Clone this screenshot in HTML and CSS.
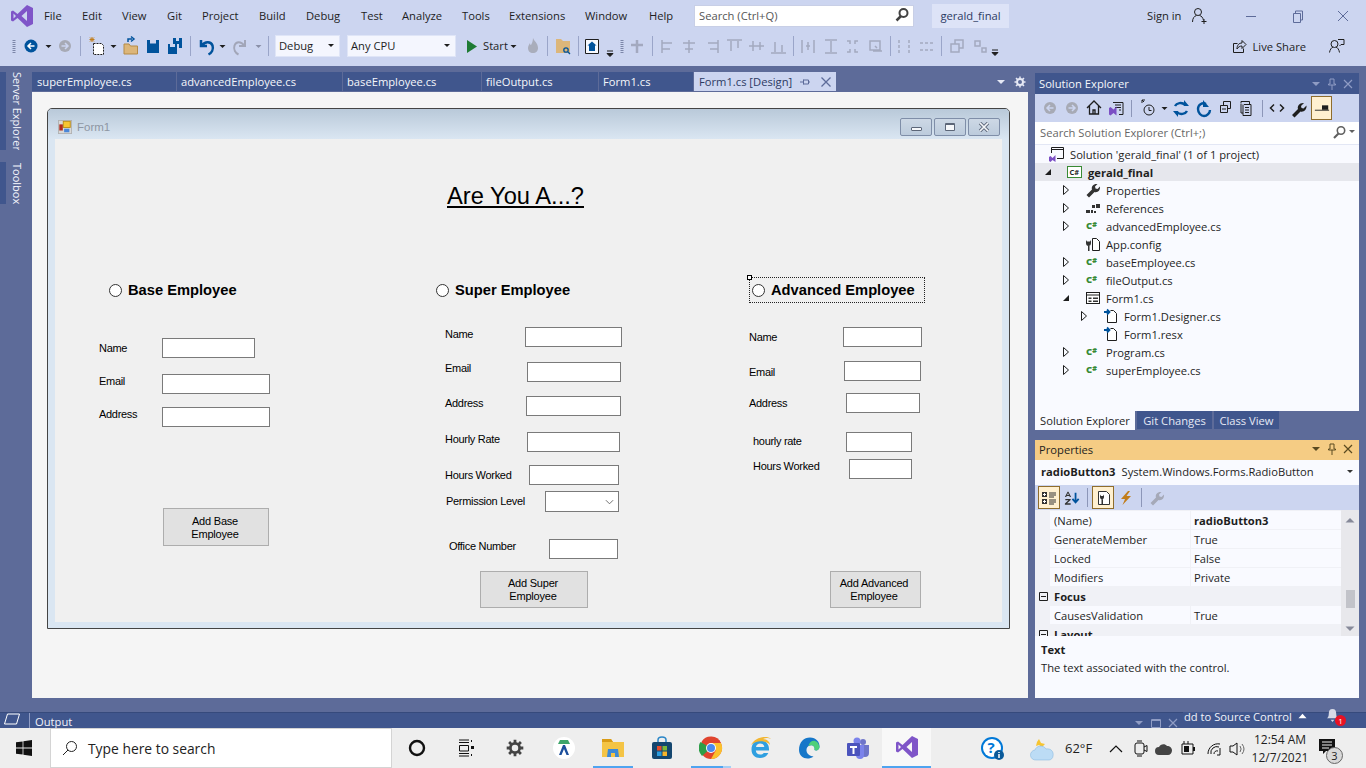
FILE: index.html
```html
<!DOCTYPE html>
<html lang="en">
<head>
<meta charset="utf-8">
<title>gerald_final - Visual Studio</title>
<link rel="stylesheet" href="styles.css">
</head>
<body>
<svg class="defs" aria-hidden="true">
  <symbol id="vs" viewBox="0 0 24 24"><path fill-rule="evenodd" d="M17 1l6 3v16l-6 3-9.500-9L3 17.500 1 16.400V7.600l2-1.100L7.500 10zM17 7l-5.500 5 5.500 5zM3.500 9.500v5L6 12z"/></symbol>
  <symbol id="exp" viewBox="0 0 16 16"><path d="M5.500 3.500l5 4.500-5 4.500z" fill="#f7f9fe" stroke="#1e1e1e"/></symbol>
  <symbol id="col" viewBox="0 0 16 16"><path d="M11 5v6H5z" fill="#1e1e1e"/></symbol>
  <symbol id="doc" viewBox="0 0 16 16"><path d="M4.500 5.500v9h9v-9l-3-3h-3" fill="#fff" stroke="#1e1e1e"/><path d="M1 4h5M4 1.500L6.500 4 4 6.500" fill="none" stroke="#00539c" stroke-width="1.800"/></symbol>
  <symbol id="wrench" viewBox="0 0 16 16"><path d="M1.500 13L7 7.500C6 4.500 8.500 1.500 12.500 2L10 4.500l.5 2 2 .5L15 4.500c.5 4-2.500 6.500-5.500 5.500L4 15.500z" fill="currentColor"/></symbol>
</svg>

<header class="titlebar">
  <svg class="logo" viewBox="0 0 24 24"><use href="#vs"/></svg>
  <nav class="menu">
    <span>File</span><span>Edit</span><span>View</span><span>Git</span><span>Project</span><span>Build</span><span>Debug</span><span>Test</span><span>Analyze</span><span>Tools</span><span>Extensions</span><span>Window</span><span>Help</span>
  </nav>
  <div class="quick-search">
    <span>Search (Ctrl+Q)</span>
    <svg class="ico16" viewBox="0 0 16 16"><circle cx="9.500" cy="6" r="4" fill="none" stroke="#424242" stroke-width="2"/><path d="M7 9l-4.500 4.500" stroke="#424242" stroke-width="2.500"/></svg>
  </div>
  <div class="solution-name">gerald_final</div>
  <div class="signin">Sign in</div>
  <svg class="person" viewBox="0 0 18 18"><circle cx="7" cy="5" r="3.500" fill="none" stroke="#1e1e1e"/><path d="M1.500 15c0-4 2-6 4-6.500M8.500 8.500c2 .5 3.500 2 4 5" fill="none" stroke="#1e1e1e"/><path d="M13 12v5M10.500 14.500h5" stroke="#1e1e1e"/></svg>
  <div class="winbtns">
    <svg viewBox="0 0 46 32"><path d="M18 16.500h10" stroke="#5d6b99"/></svg>
    <svg viewBox="0 0 46 32"><path d="M19.500 13.500h7v9h-7zM21.500 13.500v-2.500h7v9h-2" fill="none" stroke="#5d6b99"/></svg>
    <svg viewBox="0 0 46 32"><path d="M18 11l10 10M28 11L18 21" stroke="#5d6b99"/></svg>
  </div>
</header>

<div class="toolbar">
  <svg class="tb-a" viewBox="8 32 262 34">
    <path d="M14 40v13" stroke="#7c86a8" stroke-dasharray="1 1" stroke-width="3"/>
    <circle cx="31" cy="46" r="6.500" fill="#00539c"/><path d="M34.500 46h-6M31 43l-3 3 3 3" fill="none" stroke="#fff" stroke-width="1.500"/>
    <path d="M45.500 45h6l-3 3z" fill="#1e1e1e"/>
    <circle cx="65" cy="46" r="6" fill="#a7aab5"/><path d="M61.500 46h6M65 43l3 3-3 3" fill="none" stroke="#ccd5f0" stroke-width="1.500"/>
    <path d="M80.500 36v20M190.500 36v20M268.500 36v20" stroke="#9aa5c9"/>
    <path d="M93.500 43.500h8l2 2v9h-10z" fill="#fff" stroke="#1e1e1e" stroke-dasharray="2 1"/><path d="M92 37v5M89.500 39.500h5M90 37.500l4 4M94 37.500l-4 4" stroke="#c27d1a"/>
    <path d="M110.500 45h6l-3 3z" fill="#1e1e1e"/>
    <path d="M124 44h5l1.500 2h7v8h-13.500z" fill="#dcb67a" stroke="#b58b46"/><path d="M128 42v-3l4 0M131 36.500l3 2.500-3 2.500" fill="none" stroke="#00539c" stroke-width="1.500"/>
    <path d="M147 40h12v13h-12z" fill="#00539c"/><path d="M150 40h6v3.500h-6z" fill="#ccd5f0"/>
    <path d="M168 44h9v10h-9z" fill="#00539c"/><path d="M173 38h9v10h-3v-4h-6z" fill="#00539c"/><path d="M170 44h5v3h-5zM176 38h3v3h-3z" fill="#ccd5f0"/>
    <path d="M201 40v6h6M202 45.500c3-4.500 9-4 10.500 0 1.300 4-1 7.500-4 9" fill="none" stroke="#00539c" stroke-width="2.500"/>
    <path d="M219.500 45h6l-3 3z" fill="#1e1e1e"/>
    <path d="M245 40v6h-6M244 45.500c-3-4.500-8-4-9.500 0-1.300 4 1 7.500 4 9" fill="none" stroke="#a2a6b8" stroke-width="2"/>
    <path d="M255.500 45h6l-3 3z" fill="#8a90a8"/>
  </svg>
  <div class="combo combo-debug"><span>Debug</span><i class="caret"></i></div>
  <div class="combo combo-cpu"><span>Any CPU</span><i class="caret"></i></div>
  <svg class="tb-play" viewBox="456 32 27 34"><path d="M467 40l10 6.500-10 6.500z" fill="#1e7b34"/></svg>
  <span class="start">Start</span>
  <svg class="tb-b" viewBox="507 32 496 34">
    <path d="M510.500 45h6l-3 3z" fill="#1e1e1e"/>
    <path d="M533 38c1 3 5 5 5 10 0 3-2 5-5 5s-5-2-5-5c0-2 1-3 2-5 0 2 1 2 1 2 1-2 2-4 2-7z" fill="#a9adbb"/>
    <path d="M547.500 36v20M578.500 36v20M652.500 36v20M793.500 36v20M890.500 36v20M941.500 36v20" stroke="#9aa5c9"/>
    <path d="M556 39h5l2 2h7v12h-14z" fill="#dcb67a"/><circle cx="566" cy="50" r="2.200" fill="none" stroke="#00539c" stroke-width="1.300"/><path d="M568 52l2 2" stroke="#00539c" stroke-width="1.300"/>
    <path d="M585.500 39.500h13v14h-13z" fill="#f7f9fe" stroke="#1e1e1e"/><path d="M592 41.500l-4.500 4h1.500v5.500h6V45.500h1.500z" fill="#00539c"/>
    <path d="M607 51h6M607 53.500h6l-3 3z" stroke="#1e1e1e" fill="#1e1e1e"/>
    <path d="M622 40v13" stroke="#7c86a8" stroke-dasharray="1 1" stroke-width="3"/>
    <g fill="none" stroke="#a3a9bf" stroke-width="1.500">
      <path d="M637 40v13M631 45h12" stroke-width="2.500"/>
      <path d="M662 40v13M662 43h10M662 49h8"/>
      <path d="M689 40v13M683 43h12M685 49h8"/>
      <path d="M718 40v13M708 43h10M710 49h8"/>
      <path d="M727 40h15M731 41v10M738 41v7"/>
      <path d="M749 46h15M753 41v10M760 42v8"/>
      <path d="M771 53h15M775 42v10M782 45v7"/>
      <path d="M802 40v13M814 40v13M806 46h4M808 42v8"/>
      <path d="M825 40h12M825 53h12M831 41v11"/>
      <path d="M847 41l3 0v3M858 41h-3v3M847 52h3v-3M858 52h-3v-3"/>
      <path d="M870 41h10v9h-10zM873 51h9M875 46l2 2"/>
      <path d="M899 40v13M909 40v13" stroke-dasharray="3 2"/>
      <path d="M920 43h13M920 50h13" stroke-dasharray="3 2"/>
      <path d="M951 44h8v8h-8zM955 44v-4h8v8h-4"/>
      <path d="M975 41h5v5h-5zM982 48h4v4h-4z"/>
    </g>
    <path d="M992 50h6M992 52.500h6l-3 3z" stroke="#1e1e1e" fill="#1e1e1e"/>
  </svg>
  <div class="liveshare">
    <svg class="ico16" viewBox="0 0 16 16"><path d="M2.500 5.500h4M2.500 5.500v9h10v-4" fill="none" stroke="#1e1e1e"/><path d="M6 11c0-4 2-6 5-6V2.500L15 6.500l-4 4V8C9 8 7 9 6 11z" fill="none" stroke="#1e1e1e"/></svg>
    <span>Live Share</span>
  </div>
  <svg class="feedback" viewBox="0 0 18 18"><circle cx="6.500" cy="7" r="3.500" fill="none" stroke="#1e1e1e"/><path d="M1.500 15.500c.5-3 2-5 3.500-5.500M8 10c1.500.5 3 2.500 3.500 5.500M10 2.500h6v5h-3l-1.500 1.500" fill="none" stroke="#1e1e1e"/></svg>
</div>

<main class="workspace">
  <aside class="sidetabs">
    <div class="sidetab sidetab-server">Server Explorer</div>
    <div class="sidetab sidetab-toolbox">Toolbox</div>
  </aside>

  <section class="documents">
    <div class="tabwell">
      <div class="doctab tab-super">superEmployee.cs</div>
      <div class="doctab tab-adv">advancedEmployee.cs</div>
      <div class="doctab tab-base">baseEmployee.cs</div>
      <div class="doctab tab-file">fileOutput.cs</div>
      <div class="doctab tab-form">Form1.cs</div>
      <div class="doctab active">
        <span>Form1.cs [Design]</span>
        <svg class="tabpin" viewBox="0 0 12 12"><path d="M1 6h3M4.500 3.500v5M4.500 4h5v4h-5M9.500 6H11" fill="none" stroke="#5d6b99"/></svg>
        <svg class="tabclose" viewBox="0 0 12 12"><path d="M1.500 1.500l9 9M10.500 1.500l-9 9" stroke="#5d6b99" stroke-width="1.300"/></svg>
      </div>
      <div class="well-tools">
        <svg class="well-arrow" viewBox="0 0 10 6"><path d="M1 1h8L5 5z" fill="#e6e9f5"/></svg>
        <svg class="well-gear" viewBox="0 0 12 12"><circle cx="6" cy="6" r="3" fill="none" stroke="#e6e9f5" stroke-width="2"/><path d="M6 .5v2M6 9.500v2M.5 6h2M9.500 6h2M2 2l1.500 1.500M8.500 8.500L10 10M10 2L8.500 3.500M3.500 8.500L2 10" stroke="#e6e9f5" stroke-width="1.500"/></svg>
      </div>
    </div>
    <div class="designer">
      <div class="formwin">
        <div class="formtitle">
          <svg class="formicon" viewBox="0 0 16 16"><rect x=".5" y=".5" width="15" height="15" fill="#d8d8d8" stroke="#b0b0b0"/><rect x="6" y="1.500" width="8" height="7" fill="#f7c531" stroke="#b98a10"/><rect x="1.500" y="5" width="4" height="7" fill="#b12a1c"/><rect x="7" y="10" width="6" height="4" fill="#4a86d8"/></svg>
          <span class="formname">Form1</span>
          <div class="formbtns">
            <div class="formbtn"><i class="g-min"></i></div>
            <div class="formbtn"><i class="g-max"></i></div>
            <div class="formbtn"><svg viewBox="0 0 12 10"><path d="M2 1l8 8M10 1L2 9" stroke="#5f6a7c" stroke-width="3.400"/><path d="M2 1l8 8M10 1L2 9" stroke="#f5f7fa" stroke-width="1.700" fill="none"/></svg></div>
          </div>
        </div>
        <div class="client">
          <div class="heading">Are You A...?</div>

          <div class="radio r-base"><i></i><span>Base Employee</span></div>
          <div class="radio r-super"><i></i><span>Super Employee</span></div>
          <div class="selbox"></div>
          <div class="selhandle"></div>
          <div class="radio r-adv"><i></i><span>Advanced Employee</span></div>

          <label class="lbl b-l1">Name</label><div class="tx b-i1"></div>
          <label class="lbl b-l2">Email</label><div class="tx b-i2"></div>
          <label class="lbl b-l3">Address</label><div class="tx b-i3"></div>
          <div class="fbtn b-btn">Add Base<br>Employee</div>

          <label class="lbl s-l1">Name</label><div class="tx s-i1"></div>
          <label class="lbl s-l2">Email</label><div class="tx s-i2"></div>
          <label class="lbl s-l3">Address</label><div class="tx s-i3"></div>
          <label class="lbl s-l4">Hourly Rate</label><div class="tx s-i4"></div>
          <label class="lbl s-l5">Hours Worked</label><div class="tx s-i5"></div>
          <label class="lbl s-l6">Permission Level</label>
          <div class="tx s-i6"><svg viewBox="0 0 10 6"><path d="M1 1l4 4 4-4" fill="none" stroke="#606060"/></svg></div>
          <label class="lbl s-l7">Office Number</label><div class="tx s-i7"></div>
          <div class="fbtn s-btn">Add Super<br>Employee</div>

          <label class="lbl a-l1">Name</label><div class="tx a-i1"></div>
          <label class="lbl a-l2">Email</label><div class="tx a-i2"></div>
          <label class="lbl a-l3">Address</label><div class="tx a-i3"></div>
          <label class="lbl a-l4">hourly rate</label><div class="tx a-i4"></div>
          <label class="lbl a-l5">Hours Worked</label><div class="tx a-i5"></div>
          <div class="fbtn a-btn">Add Advanced<br>Employee</div>
        </div>
      </div>
    </div>
  </section>

  <aside class="rightcol">
    <section class="se-panel">
      <div class="ptitle"><span>Solution Explorer</span>
        <div class="ptools">
          <svg viewBox="0 0 10 6"><path d="M1 1h8L5 5z" fill="#8f9cc4"/></svg>
          <svg viewBox="0 0 10 12"><path d="M3 1h4v5h1.500v1h-7V6H3zM5 7v5" fill="none" stroke="#8f9cc4"/></svg>
          <svg viewBox="0 0 10 10"><path d="M1 1l8 8M9 1L1 9" stroke="#8f9cc4" stroke-width="1.200"/></svg>
        </div>
      </div>
      <div class="se-toolbar">
        <svg class="se-icons" viewBox="1036 94 272 28">
          <circle cx="1050" cy="108" r="6" fill="#a7aab5"/><path d="M1053.500 108h-6M1050 105l-3 3 3 3" fill="none" stroke="#ccd5f0" stroke-width="1.500"/>
          <circle cx="1072" cy="108" r="6" fill="#a7aab5"/><path d="M1068.500 108h6M1072 105l3 3-3 3" fill="none" stroke="#ccd5f0" stroke-width="1.500"/>
          <path d="M1087 108l7-7 7 7M1089.500 106v8h9v-8M1093 114v-4h2v4" fill="none" stroke="#1e1e1e" stroke-width="1.300"/>
          <path d="M1113 102.500h10v12h-4" fill="none" stroke="#1e1e1e"/><path d="M1115 105h6M1115 107.500h6M1119 110h2" stroke="#1e1e1e"/>
          <path d="M1109 108l1.500-1 3 2.500 3-3v9l-3-2.500-3 2.500-1.500-1z" fill="#7b4fc4"/>
          <path d="M1131.500 100v17M1262.500 100v17" stroke="#8c96b8"/>
          <circle cx="1149" cy="110" r="5" fill="none" stroke="#1e1e1e"/><path d="M1149 107v3.500h2.500M1142 100l2 2M1145 100h-3v3" fill="none" stroke="#1e1e1e"/>
          <path d="M1161.500 107h6l-3 3z" fill="#1e1e1e"/>
          <path d="M1175 106c1.500-3 7-4.500 10-1M1187 111c-1.500 3-7 4.500-10 1" fill="none" stroke="#00539c" stroke-width="2.400"/><path d="M1184 100v6h5zM1178 117v-6h-5z" fill="#00539c"/>
          <path d="M1206 104c-4-2-8 1-8 5s3 7 6 7 6-3 6-6" fill="none" stroke="#00539c" stroke-width="2.400"/><path d="M1203 100v7h6z" fill="#00539c"/>
          <path d="M1220.500 105.500h7v7h-7zM1223.500 105v-3.500h7v7h-2.500M1222 109h4" fill="none" stroke="#1e1e1e"/>
          <path d="M1241 101.500h6l2.500 0v3M1241 101.500v2M1244 104.500h7v11h-8v-11M1245 107.500h4M1245 110h4M1245 112.500h4M1241 104v9h2" fill="none" stroke="#1e1e1e"/>
          <path d="M1274 104.500l-3.500 3.500 3.500 3.500M1280 104.500l3.500 3.500-3.500 3.500" fill="none" stroke="#1e1e1e" stroke-width="1.500"/>
          <path d="M1292 115l6-6c-1-3 1.500-6.500 6-6l-3 3 .5 2 2 .5 3-3c.5 4-3 7-6 6l-6 6z" fill="#1e1e1e"/>
        </svg>
        <div class="se-active"><svg viewBox="0 0 18 8"><path d="M1 6.500h16" stroke="#1e1e1e"/><path d="M9 1h7v5H9z" fill="#1e1e1e"/></svg></div>
      </div>
      <div class="se-search">
        <span>Search Solution Explorer (Ctrl+;)</span>
        <svg class="se-mag" viewBox="0 0 24 14"><circle cx="9" cy="5.500" r="3.700" fill="none" stroke="#606060" stroke-width="1.600"/><path d="M6.500 8.500L2 13" stroke="#606060" stroke-width="2.200"/><path d="M17 5h6l-3 3z" fill="#606060"/></svg>
      </div>
      <div class="tree">
        <div class="row sol"><svg class="ti" viewBox="0 0 16 16"><path d="M2.500 7V1.500h12v11H8" fill="none" stroke="#1e1e1e"/><path d="M2.500 3.500h12" stroke="#1e1e1e"/><path d="M0 11l1.500-1 2 2 3-3v7l-3-2-2 2L0 15z" fill="#7b4fc4"/></svg><span>Solution 'gerald_final' (1 of 1 project)</span></div>
        <div class="row l0 sel"><svg class="tw" viewBox="0 0 16 16"><use href="#col"/></svg><svg class="ti" viewBox="0 0 16 16"><rect x=".5" y="2.500" width="14" height="11" fill="#fff" stroke="#388a34"/><text x="2.500" y="11" class="cs-small">C#</text></svg><b>gerald_final</b></div>
        <div class="row l1"><svg class="tw" viewBox="0 0 16 16"><use href="#exp"/></svg><svg class="ti wrench-dark" viewBox="0 0 16 16"><use href="#wrench"/></svg><span>Properties</span></div>
        <div class="row l1"><svg class="tw" viewBox="0 0 16 16"><use href="#exp"/></svg><svg class="ti" viewBox="0 0 16 16"><path d="M1 10h4v3H1zM6 10h2v3H6zM7 5h3v3H7zM11 4h4v4h-4zM9 11h2v2H9z" fill="#333"/></svg><span>References</span></div>
        <div class="row l1"><svg class="tw" viewBox="0 0 16 16"><use href="#exp"/></svg><svg class="ti" viewBox="0 0 16 16"><text x="1" y="11" class="cs-text">C<tspan class="cs-hash" dy="-2">#</tspan></text></svg><span>advancedEmployee.cs</span></div>
        <div class="row l1"><span class="tw"></span><svg class="ti" viewBox="0 0 16 16"><path d="M7.500 2.500h4l3 3v9h-7z" fill="#fff" stroke="#1e1e1e"/><path d="M1 4v3c0 2 1 3 2.500 3S6 9 6 7V4L5 5.500H2zM3 10v5h1.500v-5z" fill="#333"/></svg><span>App.config</span></div>
        <div class="row l1"><svg class="tw" viewBox="0 0 16 16"><use href="#exp"/></svg><svg class="ti" viewBox="0 0 16 16"><text x="1" y="11" class="cs-text">C<tspan class="cs-hash" dy="-2">#</tspan></text></svg><span>baseEmployee.cs</span></div>
        <div class="row l1"><svg class="tw" viewBox="0 0 16 16"><use href="#exp"/></svg><svg class="ti" viewBox="0 0 16 16"><text x="1" y="11" class="cs-text">C<tspan class="cs-hash" dy="-2">#</tspan></text></svg><span>fileOutput.cs</span></div>
        <div class="row l1"><svg class="tw" viewBox="0 0 16 16"><use href="#col"/></svg><svg class="ti" viewBox="0 0 16 16"><rect x="1.500" y="2.500" width="13" height="11" fill="#fff" stroke="#1e1e1e"/><path d="M1.500 5h13" stroke="#1e1e1e"/><path d="M3.500 7.500h3v1.500h-3zM3.500 10.500h3V12h-3zM8 7.500h5V9H8zM8 10.500h5V12H8z" fill="#333"/></svg><span>Form1.cs</span></div>
        <div class="row l2"><svg class="tw" viewBox="0 0 16 16"><use href="#exp"/></svg><svg class="ti" viewBox="0 0 16 16"><use href="#doc"/></svg><span>Form1.Designer.cs</span></div>
        <div class="row l2"><span class="tw"></span><svg class="ti" viewBox="0 0 16 16"><use href="#doc"/></svg><span>Form1.resx</span></div>
        <div class="row l1"><svg class="tw" viewBox="0 0 16 16"><use href="#exp"/></svg><svg class="ti" viewBox="0 0 16 16"><text x="1" y="11" class="cs-text">C<tspan class="cs-hash" dy="-2">#</tspan></text></svg><span>Program.cs</span></div>
        <div class="row l1"><svg class="tw" viewBox="0 0 16 16"><use href="#exp"/></svg><svg class="ti" viewBox="0 0 16 16"><text x="1" y="11" class="cs-text">C<tspan class="cs-hash" dy="-2">#</tspan></text></svg><span>superEmployee.cs</span></div>
      </div>
      <div class="se-tabs">
        <div class="se-tab on">Solution Explorer</div>
        <div class="se-tab t-git">Git Changes</div>
        <div class="se-tab t-class">Class View</div>
      </div>
    </section>

    <section class="prop-panel">
      <div class="ptitle gold"><span>Properties</span>
        <div class="ptools">
          <svg viewBox="0 0 10 6"><path d="M1 1h8L5 5z" fill="#5a4a20"/></svg>
          <svg viewBox="0 0 10 12"><path d="M3 1h4v5h1.500v1h-7V6H3zM5 7v5" fill="none" stroke="#5a4a20"/></svg>
          <svg viewBox="0 0 10 10"><path d="M1 1l8 8M9 1L1 9" stroke="#5a4a20" stroke-width="1.200"/></svg>
        </div>
      </div>
      <div class="prop-object"><b>radioButton3</b><span>System.Windows.Forms.RadioButton</span><i class="caret small"></i></div>
      <div class="prop-toolbar">
        <div class="ptb on"><svg viewBox="0 0 16 16"><path d="M1 2h5v5H1zM1 9h5v5H1z" fill="#333"/><path d="M2 4.500h3M3.500 3v3M2 11.500h3M3.500 10v3" stroke="#fff"/><path d="M8 3h7M8 5h7M8 7h5M8 10h7M8 12h7M8 14h5" stroke="#333"/></svg></div>
        <div class="ptb"><svg viewBox="0 0 18 16"><path d="M1 7l3-6h1l3 6H6.500L6 5.700H3L2.500 7zM3.500 4.500h2L4.500 2.500zM1.500 9h6v1.300L3.500 14h4v1.500h-6.500v-1.300L5 10.500H1.500z" fill="#333" fill-rule="evenodd"/><path d="M13 2v10M9.500 9l3.500 4 3.500-4" fill="none" stroke="#00539c" stroke-width="2"/></svg></div>
        <i class="ptsep"></i>
        <div class="ptb on"><svg viewBox="0 0 16 16"><path d="M3.500 1.500h8l3 3v10h-11z" fill="#fff" stroke="#333"/><path d="M5 4.500v2.500c0 1.500 1 2.500 2 2.500s2-1 2-2.500V4.500L8 6H6zM6.500 9.500v5h1.500v-5z" fill="#333"/></svg></div>
        <div class="ptb"><svg viewBox="0 0 16 16"><path d="M10 1L3 9h4l-2.500 6L13 6H8.500L12 1z" fill="#c27d1a"/></svg></div>
        <i class="ptsep"></i>
        <div class="ptb wrench-grey"><svg viewBox="0 0 16 16"><use href="#wrench"/></svg></div>
      </div>
      <div class="pgrid">
        <div class="plist">
          <div class="prow"><span>(Name)</span><b>radioButton3</b></div>
          <div class="prow"><span>GenerateMember</span><span>True</span></div>
          <div class="prow"><span>Locked</span><span>False</span></div>
          <div class="prow"><span>Modifiers</span><span>Private</span></div>
          <div class="pcat"><svg viewBox="0 0 9 9"><path d="M.5.500h8v8h-8zM2 4.500h5" fill="none" stroke="#1e1e1e"/></svg><b>Focus</b></div>
          <div class="prow"><span>CausesValidation</span><span>True</span></div>
          <div class="pcat"><svg viewBox="0 0 9 9"><path d="M.5.500h8v8h-8zM2 4.500h5" fill="none" stroke="#1e1e1e"/></svg><b>Layout</b></div>
        </div>
        <div class="pscroll">
          <svg viewBox="0 0 10 6"><path d="M5 1l4.500 4.500h-9z" fill="#868999"/></svg>
          <i class="thumb"></i>
          <svg viewBox="0 0 10 6"><path d="M5 5L.5.500h9z" fill="#868999"/></svg>
        </div>
      </div>
      <div class="pdesc"><b>Text</b><span>The text associated with the control.</span></div>
    </section>
  </aside>
</main>

<div class="outputbar">
  <svg class="out-icon" viewBox="0 0 16 12"><path d="M3.500 1h12l-3 10H.500z" fill="none" stroke="#fff"/></svg>
  <i class="out-sep"></i>
  <span class="out-label">Output</span>
  <div class="out-tools">
    <svg viewBox="0 0 10 6"><path d="M1 1h8L5 5z" fill="#8f9cc4"/></svg>
    <svg viewBox="0 0 10 10"><path d="M.5 1.500h9v8h-9zM.5 2.500h9" fill="none" stroke="#8f9cc4"/></svg>
    <svg viewBox="0 0 10 10"><path d="M1 1l8 8M9 1L1 9" stroke="#8f9cc4" stroke-width="1.200"/></svg>
  </div>
  <div class="source-control"><span>dd to Source Control</span><svg viewBox="0 0 10 6"><path d="M5 .5l4.500 5h-9z" fill="#fff"/></svg></div>
  <div class="bell">
    <svg viewBox="0 0 14 16"><path d="M7 1c-3 0-4 2-4 5 0 3-1 4-2 5h12c-1-1-2-2-2-5 0-3-1-5-4-5zM5 12.500h4L7 15z" fill="#d6d9e6"/></svg>
    <span class="badge">1</span>
  </div>
</div>

<footer class="taskbar">
  <div class="slot-start"><svg viewBox="0 0 16 16"><path d="M0 2.300L6.600 1.400V7.600H0zM7.400 1.300L16 0V7.600H7.400zM0 8.400H6.600V14.600L0 13.700zM7.400 8.400H16V16L7.400 14.700z" fill="#111"/></svg></div>
  <div class="tsearch">
    <svg viewBox="0 0 16 16"><circle cx="9.500" cy="6.500" r="5" fill="none" stroke="#222"/><path d="M6 10l-5 5" stroke="#222"/></svg>
    <span>Type here to search</span>
  </div>
  <div class="tslot"><svg viewBox="0 0 24 24"><circle cx="12" cy="12" r="7" fill="none" stroke="#111" stroke-width="2.400"/></svg></div>
  <div class="tslot"><svg viewBox="-2 -2 24 24"><path d="M3 2h10M3 4.500h10M3 15.500h10M3 18h10M3.500 7.500h9v5.500h-9zM15.500 2v2M15.500 16v2" fill="none" stroke="#111"/><path d="M15 8h3v3h-3z" fill="#111"/></svg></div>
  <div class="tslot"><svg viewBox="-3 -3 26 26"><circle cx="10" cy="10" r="5" fill="none" stroke="#444" stroke-width="3"/><path d="M10 1v4M10 15v4M1 10h4M15 10h4M3.600 3.600l2.800 2.800M13.600 13.600l2.800 2.800M16.400 3.600l-2.800 2.800M6.400 13.600l-2.800 2.800" stroke="#444" stroke-width="3"/></svg></div>
  <div class="tslot"><svg viewBox="0 0 24 24"><circle cx="12" cy="12" r="11" fill="#fff"/><path d="M8 4h8l2 4H6z" fill="#3ea56a"/><path d="M7 19l4-10h2l4 10h-2.500L12 13l-2.500 6z" fill="#1c4f9c"/></svg></div>
  <div class="tslot under-full"><svg viewBox="0 0 24 24"><path d="M1 3h9l2 3h11v15H1z" fill="#f4c445"/><path d="M1 3h9l2 3H1z" fill="#d99b16"/><path d="M7 13h10l1 8H6z" fill="#3d8ad6"/><path d="M10 17h4v4h-4z" fill="#f4c445"/></svg></div>
  <div class="tslot"><svg viewBox="0 0 24 24"><path d="M8 7V4c0-2 1.500-3 4-3s4 1 4 3v3" fill="none" stroke="#2a86c7" stroke-width="1.500"/><rect x="2" y="6" width="20" height="17" rx="2" fill="#14466f"/><path d="M7 10h4.500v4.500H7z" fill="#e74c2c"/><path d="M12.500 10H17v4.500h-4.500z" fill="#7bb83a"/><path d="M7 15.500h4.500V20H7z" fill="#2a9de0"/><path d="M12.500 15.500H17V20h-4.500z" fill="#f7b52b"/></svg></div>
  <div class="tslot under-two"><svg viewBox="0 0 24 24"><circle cx="12" cy="12" r="11" fill="#e0442e"/><path d="M12 12L3 20a11 11 0 0 1-1.500-14z" fill="#2e9e49"/><path d="M12 7h10a11 11 0 0 1-10 16l5-9z" fill="#fbc02d"/><path d="M2.500 6A11 11 0 0 1 22 7H12z" fill="#e0442e"/><circle cx="12" cy="12" r="5" fill="#fff"/><circle cx="12" cy="12" r="4" fill="#4a8af0"/></svg></div>
  <div class="tslot"><svg viewBox="0 0 24 24"><path d="M12 4C7 4 3.500 8 3.500 13.500S7 22 12 22c4 0 7-2 8.300-5h-4.500c-1 1-2 1.500-3.600 1.500-2.500 0-4.200-1.500-4.400-4H21c.5-6-3-10.500-9-10.500zM8 11c.3-2.200 2-3.500 4.200-3.500S16 8.800 16.300 11z" fill="#2f9fe0"/><path d="M3 9C7 1 19 -1 23 3c-2-1-5-1.500-8 0 4 0 7 3 7 6-3-4-13-6-19 0z" fill="#f2b632"/></svg></div>
  <div class="tslot"><svg viewBox="0 0 24 24"><path d="M2 14C2 6 7 1.500 13 1.500S23 6 22.500 11c-.3 3-3 4-5 3 1-4-3-6-6-4-4 3-2 10 5 10.500-2 1.500-4 2-6 2C6 22.500 2 19 2 14z" fill="#1677c9"/><path d="M22.500 11c-.3 3-3 4-5 3 1-4-3-6-6-4C13 3 21 3 22.500 11z" fill="#4fd07a"/></svg></div>
  <div class="tslot"><svg viewBox="0 0 24 24"><circle cx="17" cy="6" r="3" fill="#6e75c9"/><circle cx="11" cy="5" r="3.500" fill="#7b83eb"/><path d="M14 9h9v8a4 4 0 0 1-8 0z" fill="#6e75c9"/><path d="M6 9h12v10a4 4 0 0 1-8 0H6z" fill="#7b83eb"/><rect x="1" y="7" width="13" height="13" rx="1" fill="#4b53bc"/><path d="M4 10h7v2H8.500v6h-2v-6H4z" fill="#fff"/></svg></div>
  <div class="tslot vs-active"><svg class="vs-task" viewBox="0 0 24 24"><use href="#vs"/></svg></div>

  <svg class="tray-a" viewBox="0 0 134 40">
    <circle cx="61" cy="20" r="11" fill="#0078d7"/><circle cx="61" cy="20" r="9" fill="#fff"/><text x="56.500" y="25" class="helpq">?</text><circle cx="68" cy="27" r="5" fill="#0a5a9a"/><path d="M68 26v4M68 24v1" stroke="#fff" stroke-width="1.500"/>
    <path d="M108 11l2 4 4 1-3 3-3-2-3 1 1-4z" fill="#f7c531"/>
    <path d="M105 32a5 5 0 0 1-1-10c1-4 8-6 11-1 5-1 8 3 7 7 0 2-2 4-4 4z" fill="#bcdcf5" stroke="#7fb3dd" stroke-width=".5"/>
  </svg>
  <span class="temp">62°F</span>
  <svg class="tray-b" viewBox="1098 728 157 40">
    <path d="M1111 752l6-6 6 6" fill="none" stroke="#111" stroke-width="1.200"/>
    <rect x="1136" y="743" width="9" height="11" rx="2" fill="none" stroke="#111"/><path d="M1145 747l3-1.500v6l-3-1.500M1138 741h5M1138 756h5" fill="none" stroke="#111"/>
    <path d="M1160 755a4 4 0 0 1 0-8c1-3 6-4 8-1 3 0 5 2 5 4.500s-2 4.500-4 4.500z" fill="#444"/>
    <path d="M1183 744h11v10h-11z" fill="none" stroke="#111"/><path d="M1185 746h5v6h-5zM1194 747h2v4h-2z" fill="#111"/><path d="M1185 741v3M1189 741v3" stroke="#111"/>
    <path d="M1209 754a10 10 0 0 1 12-10M1212 754a6 6 0 0 1 8-7M1215 754a3 3 0 0 1 4-3" fill="none" stroke="#111"/><path d="M1221 748v7M1218 755h3" stroke="#111"/>
    <path d="M1231 746h3l4-3v12l-4-3h-3z" fill="none" stroke="#111"/><path d="M1241 746a5 5 0 0 1 0 6M1243 744a8 8 0 0 1 0 10" fill="none" stroke="#666"/>
  </svg>
  <div class="clock"><span>12:54 AM</span><span>12/7/2021</span></div>
  <div class="notif">
    <svg viewBox="0 0 16 16"><path d="M0 0h16v12H7l-3 3v-3H0z" fill="#111"/><path d="M3 3h10M3 6h10M3 9h7" stroke="#eee"/></svg>
    <span class="notif-badge">3</span>
  </div>
</footer>
</body>
</html>
```

FILE: styles.css
```css
* { box-sizing: border-box; }
html, body { margin: 0; padding: 0; }
body {
  width: 1366px; height: 768px; overflow: hidden;
  display: flex; flex-direction: column;
  font-family: "Open Sans", "Noto Sans", sans-serif;
  font-size: 11.2px; color: #1e1e1e; background: #5d6b99;
}
svg { display: block; flex: none; }
.defs { position: absolute; width: 0; height: 0; }
.cs-text { font: 800 9.500px "Open Sans", sans-serif; fill: #388a34; }
.cs-hash { font-size: 7px; }
.cs-small { font: 700 7.500px "Open Sans", sans-serif; fill: #222; }
.helpq { font: 700 15px "Open Sans", sans-serif; fill: #0078d7; }

/* Title bar */
.titlebar { height: 32px; flex: none; background: #ccd5f0; display: flex; align-items: center; position: relative; }
.logo { width: 24px; height: 24px; margin-left: 10px; fill: #7f55c8; }
.menu { margin-left: 10px; margin-top: -2px; width: 650px; display: grid; grid-template-columns: 38px 40px 45px 35px 57px 47px 55px 41px 60px 47px 76px 64px 1fr; }
.quick-search { width: 220px; height: 22px; background: #fff; border: 1px solid #c8cfe6; display: flex; align-items: center; justify-content: space-between; padding: 0 3px 2px 4px; color: #555; }
.ico16 { width: 16px; height: 16px; }
.solution-name { width: 77px; height: 24px; margin-left: 18px; padding-bottom: 2px; background: #dde3f7; display: flex; align-items: center; justify-content: center; color: #2c3a63; }
.signin { margin-left: 138px; margin-top: -2px; }
.person { width: 18px; height: 18px; margin-left: 9px; }
.winbtns { margin-left: auto; display: flex; }
.winbtns svg { width: 46px; height: 32px; }

/* Toolbar */
.toolbar { height: 34px; flex: none; background: #ccd5f0; display: flex; align-items: flex-start; padding-left: 8px; }
.tb-a { width: 262px; height: 34px; }
.combo { height: 22px; margin-top: 3px; background: #f4f6fe; border: 1px solid #dfe5f7; display: flex; align-items: center; justify-content: space-between; padding: 0 3px 1px; }
.combo-debug { width: 65px; margin-left: 5px; }
.combo-cpu { width: 109px; margin-left: 7px; }
.caret { width: 0; height: 0; border: 3px solid transparent; border-top: 3px solid #1e1e1e; margin-top: 3px; margin-right: 2px; }
.tb-play { width: 27px; height: 34px; }
.start { width: 24px; margin-top: 6px; }
.tb-b { width: 496px; height: 34px; }
.liveshare { margin-left: auto; margin-top: 6px; display: flex; align-items: center; gap: 5px; }
.feedback { width: 18px; height: 18px; margin-top: 5px; margin-left: 22px; margin-right: 20px; }

/* Workspace */
.workspace { height: 646px; flex: none; display: flex; background: #5d6b99; }
.sidetabs { width: 32px; flex: none; padding-top: 6px; display: flex; flex-direction: column; }
.sidetab { writing-mode: vertical-rl; border-left: 6px solid #40568d; width: 24px; color: #f2f4fb; padding-left: 3px; line-height: 14px; white-space: nowrap; font-size: 11px; overflow: hidden; }
.sidetab-server { height: 78px; }
.sidetab-toolbox { height: 42px; margin-top: 12px; padding-top: 1px; }

.documents { width: 996px; flex: none; padding-top: 6px; display: flex; flex-direction: column; height: 632px; }
.tabwell { height: 20px; flex: none; display: flex; gap: 1px; position: relative; }
.doctab { height: 19px; background: #40568d; color: #f5f6fb; display: flex; align-items: center; padding-left: 4px; font-size: 11.200px; }
.tab-super { width: 144px; padding-left: 5px; }
.tab-adv { width: 165px; }
.tab-base { width: 138px; }
.tab-file { width: 116px; }
.tab-form { width: 94px; }
.doctab.active { width: 142px; padding-left: 5px; background: #ccd5f0; color: #2c3a63; }
.tabpin { width: 12px; height: 12px; margin-left: 7px; }
.tabclose { width: 12px; height: 12px; margin-left: 9px; }
.well-tools { margin-left: auto; display: flex; align-items: center; gap: 8px; height: 19px; padding-right: 2px; }
.well-arrow { width: 10px; height: 6px; }
.well-gear { width: 12px; height: 12px; }
.designer { flex: 1; background: #f5f5f5; padding: 16px 18px 0 15px; }

.formwin { width: 963px; height: 521px; background: #dae6f2; border: 1px solid #444; border-radius: 5px 5px 0 0; padding: 0 7px 6px; display: flex; flex-direction: column; }
.formtitle { height: 30px; flex: none; margin: 0 -7px; padding: 6px 9px 0 10px; background: linear-gradient(#b9c9d9, #dae6f2); border-radius: 4px 4px 0 0; display: flex; align-items: center; }
.formicon { width: 14px; height: 14px; }
.formname { margin-left: 5px; color: #8e96a3; font-family: "Liberation Sans", sans-serif; font-size: 11.500px; }
.formbtns { margin-left: auto; display: flex; gap: 2px; }
.formbtn { width: 32px; height: 18px; border: 1px solid #7f8ea8; border-radius: 2px; background: linear-gradient(#cdd8e5, #bccbdc); display: flex; align-items: center; justify-content: center; }
.formbtn svg { width: 12px; height: 10px; }
.g-min { width: 11px; height: 4px; background: #f5f7fa; border: 1px solid #5c6678; margin-top: 4px; border-radius: 1px; }
.g-max { width: 10px; height: 8px; background: #f5f7fa; border: 1px solid #5c6678; border-top-width: 2px; border-radius: 1px; }
.client { flex: 1; position: relative; background: #f0f0f0; font-family: "Liberation Sans", Arial, sans-serif; }
.heading { position: absolute; left: 392px; top: 43px; font-size: 23.700px; line-height: 28px; text-decoration: underline; color: #000; }

.radio { position: absolute; top: 141px; height: 20px; display: flex; align-items: center; gap: 6px; font-size: 14.700px; font-weight: 700; color: #000; white-space: nowrap; }
.radio i { width: 13px; height: 13px; border: 1px solid #333; border-radius: 50%; background: #fff; flex: none; }
.r-base { left: 54px; }
.r-super { left: 381px; }
.r-adv { left: 697px; }
.selbox { position: absolute; left: 694px; top: 138px; width: 176px; height: 26px; border: 1px dotted #222; }
.selhandle { position: absolute; left: 692px; top: 136px; width: 5px; height: 5px; background: #fff; border: 1px solid #000; }

.lbl { position: absolute; font-size: 11px; line-height: 14px; letter-spacing: -.3px; color: #000; white-space: nowrap; }
.tx { position: absolute; height: 20px; background: #fff; border: 1px solid #7a7a7a; }
.fbtn { position: absolute; display: flex; align-items: center; justify-content: center; text-align: center; background: #e1e1e1; border: 1px solid #adadad; font-size: 11px; line-height: 13px; letter-spacing: -.2px; color: #000; padding-right: 2px; }

.b-l1 { left: 44px; top: 202px; }
.b-l2 { left: 44px; top: 235px; }
.b-l3 { left: 44px; top: 268px; }
.b-i1 { left: 107px; top: 199px; width: 93px; }
.b-i2 { left: 107px; top: 235px; width: 108px; }
.b-i3 { left: 107px; top: 268px; width: 108px; }
.b-btn { left: 108px; top: 369px; width: 106px; height: 38px; padding-top: 1px; }

.s-l1 { left: 390px; top: 188px; }
.s-l2 { left: 390px; top: 222px; }
.s-l3 { left: 390px; top: 257px; }
.s-l4 { left: 390px; top: 293px; }
.s-l5 { left: 390px; top: 329px; }
.s-l6 { left: 391px; top: 355px; }
.s-l7 { left: 394px; top: 400px; }
.s-i1 { left: 470px; top: 188px; width: 97px; }
.s-i2 { left: 472px; top: 223px; width: 94px; }
.s-i3 { left: 471px; top: 257px; width: 95px; }
.s-i4 { left: 472px; top: 293px; width: 93px; }
.s-i5 { left: 474px; top: 326px; width: 90px; }
.s-i6 { left: 490px; top: 352px; width: 74px; height: 21px; display: flex; align-items: center; justify-content: flex-end; padding-right: 4px; }
.s-i6 svg { width: 9px; height: 6px; }
.s-i7 { left: 494px; top: 400px; width: 69px; }
.s-btn { left: 425px; top: 432px; width: 108px; height: 37px; }

.a-l1 { left: 694px; top: 191px; }
.a-l2 { left: 694px; top: 226px; }
.a-l3 { left: 694px; top: 257px; }
.a-l4 { left: 698px; top: 295px; }
.a-l5 { left: 698px; top: 320px; }
.a-i1 { left: 788px; top: 188px; width: 79px; }
.a-i2 { left: 789px; top: 222px; width: 77px; }
.a-i3 { left: 791px; top: 254px; width: 74px; }
.a-i4 { left: 791px; top: 293px; width: 66px; }
.a-i5 { left: 794px; top: 320px; width: 63px; }
.a-btn { left: 775px; top: 432px; width: 91px; height: 37px; padding-right: 3px; }

/* Right column */
.rightcol { width: 324px; flex: none; margin-left: 7px; padding-top: 7px; display: flex; flex-direction: column; }
.se-panel { height: 357px; display: flex; flex-direction: column; }
.ptitle { height: 21px; flex: none; background: #40568d; color: #f5f6fb; display: flex; align-items: center; justify-content: space-between; padding: 0 6px 0 4px; }
.ptitle.gold { background: #f5cc84; color: #1e1e1e; height: 20px; padding-bottom: 2px; }
.ptools { display: flex; align-items: center; gap: 6px; }
.ptools svg:nth-child(1) { width: 10px; height: 6px; }
.ptools svg:nth-child(2) { width: 10px; height: 12px; }
.ptools svg:nth-child(3) { width: 10px; height: 10px; }
.se-toolbar { height: 28px; flex: none; background: #ccd5f0; display: flex; align-items: center; padding-left: 1px; }
.se-icons { width: 272px; height: 28px; }
.se-active { width: 21px; height: 24px; margin-left: 3px; background: #fff0d0; border: 1px solid #8f6d2c; display: flex; align-items: center; justify-content: center; }
.se-active svg { width: 16px; height: 8px; }
.se-search { height: 23px; flex: none; background: #fff; border-bottom: 1px solid #e3e7f5; display: flex; align-items: center; justify-content: space-between; padding: 0 3px 2px 5px; color: #666; }
.se-mag { width: 24px; height: 14px; }
.tree { flex: 1; background: #f9faff; }
.row { height: 18px; display: flex; align-items: center; white-space: nowrap; }
.tw { width: 16px; height: 16px; margin-right: 11px; flex: none; }
.ti { width: 16px; height: 16px; margin-right: 5px; }
.sol { padding-left: 14px; }
.l0 { padding-left: 5px; }
.l1 { padding-left: 23px; }
.l2 { padding-left: 41px; }
.sel { background: #e6e7ed; }
.wrench-dark { color: #333; }
.se-tabs { height: 19px; flex: none; display: flex; gap: 2px; }
.se-tab { background: #40568d; color: #e6e9f5; height: 18px; display: flex; align-items: center; justify-content: center; }
.se-tab.on { width: 100px; background: #f9faff; color: #1e1e1e; height: 19px; }
.t-git { width: 75px; }
.t-class { width: 65px; }

.prop-panel { height: 258px; margin-top: 10px; display: flex; flex-direction: column; background: #f9faff; }
.prop-object { height: 25px; flex: none; background: #f9faff; display: flex; align-items: center; padding: 0 6px 2px; }
.prop-object span { margin-left: 6px; }
.caret.small { margin-left: auto; margin-right: 0; border-top-color: #333; }
.prop-toolbar { height: 25px; flex: none; background: #ccd5f0; display: flex; align-items: center; padding-left: 3px; gap: 1px; }
.ptb { width: 22px; height: 23px; display: flex; align-items: center; justify-content: center; border: 1px solid transparent; }
.ptb svg { width: 16px; height: 16px; }
.ptb.on { background: #fff0d0; border-color: #8f6d2c; }
.ptsep { width: 1px; height: 19px; background: #8c96b8; margin: 0 3px; }
.wrench-grey { color: #a5a9b8; }
.pgrid { height: 126px; flex: none; display: flex; overflow: hidden; }
.plist { width: 306px; background: #f0f1f6; overflow: hidden; padding-top: 1px; }
.prow { height: 19px; display: grid; grid-template-columns: 140px 1fr; margin-left: 15px; }
.prow span, .prow b { background: #f9faff; border-bottom: 1px solid #f0f1f6; display: flex; align-items: center; padding-left: 4px; font-weight: 400; height: 19px; }
.prow span:last-child, .prow b { border-left: 1px solid #f0f1f6; padding-left: 3px; }
.prow b { font-weight: 700; }
.pcat { height: 19px; display: flex; align-items: center; padding-left: 4px; }
.pcat svg { width: 9px; height: 9px; margin-right: 6px; }
.pscroll { width: 18px; background: #e8e8ec; position: relative; display: flex; flex-direction: column; align-items: center; padding-top: 7px; }
.pscroll svg { width: 10px; height: 6px; }
.thumb { display: block; width: 9px; height: 18px; background: #c2c3c9; margin-top: 67px; margin-bottom: 18px; }
.pdesc { flex: 1; display: flex; flex-direction: column; padding: 6px 6px; gap: 3px; line-height: 15px; }

/* Output bar */
.outputbar { height: 16px; flex: none; background: #40568d; border-top: 1px solid #364a7c; display: flex; align-items: flex-start; color: #f0f2fa; position: relative; }
.out-icon { width: 16px; height: 12px; margin: 0 0 0 4px; }
.out-sep { width: 1px; height: 15px; background: #8f9cc4; margin-left: 9px; }
.out-label { margin-left: 5px; line-height: 15px; margin-top: 1px; }
.out-tools { position: absolute; left: 1134px; top: 4px; display: flex; gap: 7px; align-items: center; height: 12px; }
.out-tools svg { width: 10px; height: 10px; }
.source-control { position: absolute; left: 1183px; top: -1px; width: 119px; height: 16px; padding: 0 0 8px 1px; background: #40568d; display: flex; align-items: center; gap: 6px; white-space: nowrap; }
.source-control svg { width: 9px; height: 6px; }
.bell { position: absolute; left: 1326px; top: -5px; width: 22px; height: 16px; }
.bell svg { width: 13px; height: 15px; }
.badge { position: absolute; left: 9px; top: 7px; width: 11px; height: 11px; border-radius: 50%; background: #e81123; color: #fff; font-size: 8px; line-height: 11px; text-align: center; }

/* Taskbar */
.taskbar { height: 40px; flex: none; background: #eeeeee; display: flex; align-items: center; position: relative; }
.slot-start { width: 50px; height: 40px; display: flex; align-items: center; justify-content: center; }
.slot-start svg { width: 16px; height: 16px; margin-left: -2px; }
.tsearch { width: 342px; height: 40px; background: #fff; border: 1px solid #d4d4d4; display: flex; align-items: center; padding-left: 11px; gap: 10px; font-size: 13.850px; color: #222; }
.tsearch svg { width: 16px; height: 16px; }
.tslot { width: 49px; height: 40px; display: flex; align-items: center; justify-content: center; position: relative; }
.tslot svg { width: 24px; height: 24px; }
.under-full::after { content: ""; position: absolute; left: 5px; right: 4px; bottom: 0; height: 2px; background: #4fa4f0; }
.under-two::after { content: ""; position: absolute; left: 5px; right: 4px; bottom: 0; height: 2px; background: linear-gradient(90deg, #4fa4f0 80%, #a6cff5 80%); }
.vs-active { background: #f8f8f8; border-bottom: 2px solid #4fa4f0; }
.vs-task { fill: #7f55c8; }
.tray-a { width: 134px; height: 40px; }
.temp { width: 32px; font-size: 13px; }
.tray-b { width: 157px; height: 40px; }
.clock { width: 52px; display: flex; flex-direction: column; align-items: center; gap: 3px; font-size: 12px; line-height: 15px; white-space: nowrap; }
.notif { position: relative; width: 30px; height: 40px; margin-left: 11px; }
.notif svg { width: 16px; height: 16px; position: absolute; left: 2px; top: 11px; }
.notif-badge { position: absolute; left: 9px; top: 19px; width: 17px; height: 17px; border-radius: 50%; background: #d9d9d9; border: 1px solid #666; font-size: 11px; line-height: 15px; text-align: center; }
```
